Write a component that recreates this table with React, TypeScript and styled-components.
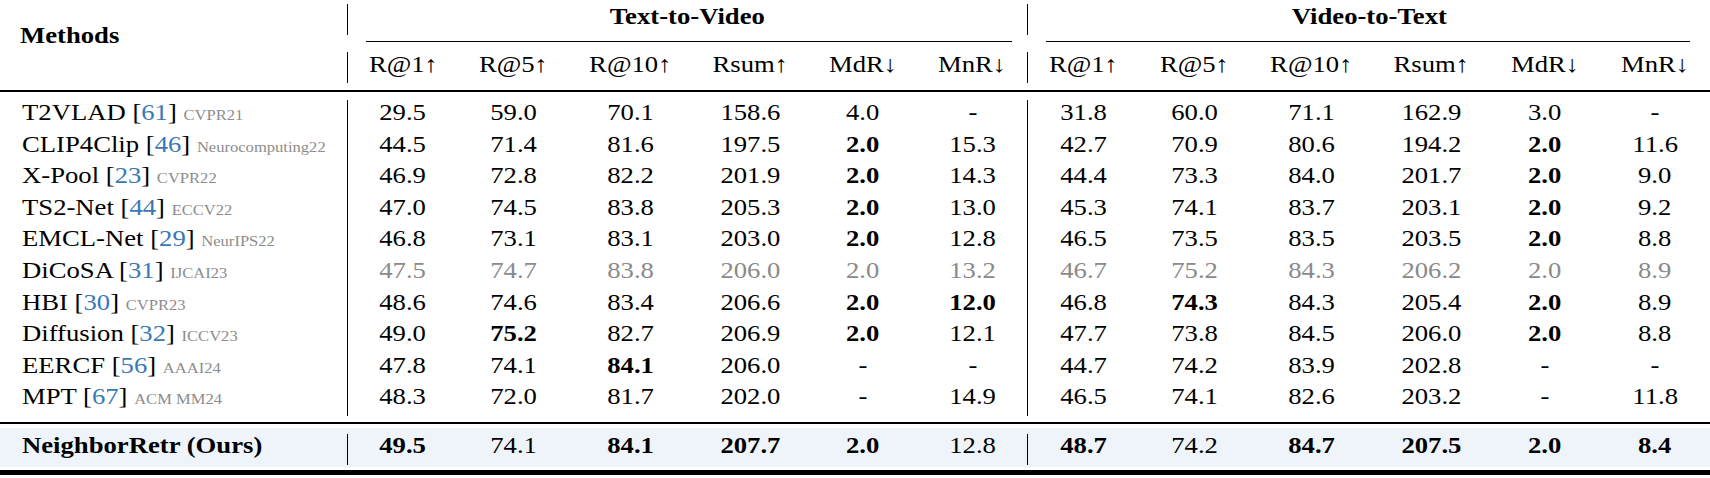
import React from "react";
import styled, { createGlobalStyle } from "styled-components";

const GlobalStyle = createGlobalStyle`
  html, body {
    margin: 0;
    padding: 0;
    background: #ffffff;
  }
`;

// method column + 6 text-to-video + 6 video-to-text columns
const COLUMNS =
  "347px 111px 111px 123px 116px 110px 109px 112px 111px 123px 117px 110px 110px";

const Page = styled.div`
  width: 1710px;
  font-family: "Liberation Serif", "Times New Roman", "DejaVu Serif", serif;
  font-size: 23.5px;
  color: #000;
`;

// the source table was captured a little wide, so glyphs get stretched sideways
const Stretch = styled.span<{ $origin?: "left" | "center" }>`
  display: inline-block;
  white-space: nowrap;
  transform: scaleX(1.135);
  transform-origin: ${(p) => p.$origin ?? "center"};
`;

const HeaderGrid = styled.div`
  display: grid;
  grid-template-columns: ${COLUMNS};
  grid-template-rows: 31px 17px 31px;
  padding-top: 4px;
`;

const MethodsHead = styled.div`
  grid-row: 1 / 4;
  grid-column: 1;
  padding: 17.5px 0 0 20px;
  line-height: 26px;
  font-weight: 700;
`;

const GroupTitle = styled.div<{ $col: number }>`
  grid-row: 1;
  grid-column: ${(p) => p.$col} / span 6;
  border-left: 1px solid #000;
  text-align: center;
  line-height: 24px;
  font-weight: 700;
`;

const CmidSlot = styled.div<{ $col: number; $left: number; $right: number }>`
  grid-row: 2;
  grid-column: ${(p) => p.$col} / span 6;
  padding: 6px ${(p) => p.$right}px 0 ${(p) => p.$left}px;
`;

const CmidLine = styled.div`
  height: 1px;
  background: #000;
`;

const SubHead = styled.div<{ $col: number; $sep?: boolean }>`
  grid-row: 3;
  grid-column: ${(p) => p.$col};
  text-align: center;
  line-height: 25px;
  border-left: ${(p) => (p.$sep ? "1px solid #000" : "none")};
`;

const Rule = styled.div<{ $h: number; $top: number; $bottom: number }>`
  height: ${(p) => p.$h}px;
  margin: ${(p) => p.$top}px 0 ${(p) => p.$bottom}px;
  background: #000;
`;

const Row = styled.div<{ $h: number; $lh: number }>`
  display: grid;
  grid-template-columns: ${COLUMNS};
  height: ${(p) => p.$h}px;
  line-height: ${(p) => p.$lh}px;
`;

const MethodCell = styled.div<{ $bold?: boolean }>`
  padding-left: 22px;
  white-space: nowrap;
  font-weight: ${(p) => (p.$bold ? 700 : 400)};
`;

const Cite = styled.span`
  color: #3b78b4;
`;

const Venue = styled.span`
  font-size: 14.6px;
  color: #8c8c8c;
`;

const Cell = styled.div<{ $sep?: boolean; $bold?: boolean; $muted?: boolean }>`
  text-align: center;
  white-space: nowrap;
  border-left: ${(p) => (p.$sep ? "1px solid #000" : "none")};
  font-weight: ${(p) => (p.$bold ? 700 : 400)};
  color: ${(p) => (p.$muted ? "#8a8a8a" : "#000")};
`;

const OursBand = styled.div`
  background: #eef4fa;
  padding: 6px 0 2px;
`;

type Method = {
  name: string;
  cite: string;
  venue: string;
  muted?: boolean;
  t2v: string[];
  v2t: string[];
};

// a leading "*" marks a bold (best) value
const methods: Method[] = [
  { name: "T2VLAD", cite: "61", venue: "CVPR21", t2v: ["29.5", "59.0", "70.1", "158.6", "4.0", "-"], v2t: ["31.8", "60.0", "71.1", "162.9", "3.0", "-"] },
  { name: "CLIP4Clip", cite: "46", venue: "Neurocomputing22", t2v: ["44.5", "71.4", "81.6", "197.5", "*2.0", "15.3"], v2t: ["42.7", "70.9", "80.6", "194.2", "*2.0", "11.6"] },
  { name: "X-Pool", cite: "23", venue: "CVPR22", t2v: ["46.9", "72.8", "82.2", "201.9", "*2.0", "14.3"], v2t: ["44.4", "73.3", "84.0", "201.7", "*2.0", "9.0"] },
  { name: "TS2-Net", cite: "44", venue: "ECCV22", t2v: ["47.0", "74.5", "83.8", "205.3", "*2.0", "13.0"], v2t: ["45.3", "74.1", "83.7", "203.1", "*2.0", "9.2"] },
  { name: "EMCL-Net", cite: "29", venue: "NeurIPS22", t2v: ["46.8", "73.1", "83.1", "203.0", "*2.0", "12.8"], v2t: ["46.5", "73.5", "83.5", "203.5", "*2.0", "8.8"] },
  { name: "DiCoSA", cite: "31", venue: "IJCAI23", muted: true, t2v: ["47.5", "74.7", "83.8", "206.0", "2.0", "13.2"], v2t: ["46.7", "75.2", "84.3", "206.2", "2.0", "8.9"] },
  { name: "HBI", cite: "30", venue: "CVPR23", t2v: ["48.6", "74.6", "83.4", "206.6", "*2.0", "*12.0"], v2t: ["46.8", "*74.3", "84.3", "205.4", "*2.0", "8.9"] },
  { name: "Diffusion", cite: "32", venue: "ICCV23", t2v: ["49.0", "*75.2", "82.7", "206.9", "*2.0", "12.1"], v2t: ["47.7", "73.8", "84.5", "206.0", "*2.0", "8.8"] },
  { name: "EERCF", cite: "56", venue: "AAAI24", t2v: ["47.8", "74.1", "*84.1", "206.0", "-", "-"], v2t: ["44.7", "74.2", "83.9", "202.8", "-", "-"] },
  { name: "MPT", cite: "67", venue: "ACM MM24", t2v: ["48.3", "72.0", "81.7", "202.0", "-", "14.9"], v2t: ["46.5", "74.1", "82.6", "203.2", "-", "11.8"] },
];

const ours = {
  t2v: ["*49.5", "74.1", "*84.1", "*207.7", "*2.0", "12.8"],
  v2t: ["*48.7", "74.2", "*84.7", "*207.5", "*2.0", "*8.4"],
};

const metrics = ["R@1↑", "R@5↑", "R@10↑", "Rsum↑", "MdR↓", "MnR↓"];

const ValueCells = ({ values, muted }: { values: string[]; muted?: boolean }) => (
  <>
    {values.map((v, i) => {
      const bold = v.startsWith("*");
      return (
        <Cell key={i} $sep={i === 0 || i === 6} $bold={bold} $muted={muted}>
          <Stretch>{bold ? v.slice(1) : v}</Stretch>
        </Cell>
      );
    })}
  </>
);

const App: React.FC = () => {
  return (
    <Page>
      <GlobalStyle />
      <HeaderGrid>
        <MethodsHead>
          <Stretch $origin="left">Methods</Stretch>
        </MethodsHead>
        <GroupTitle $col={2}>
          <Stretch>Text-to-Video</Stretch>
        </GroupTitle>
        <GroupTitle $col={8}>
          <Stretch>Video-to-Text</Stretch>
        </GroupTitle>
        <CmidSlot $col={2} $left={19} $right={15}>
          <CmidLine />
        </CmidSlot>
        <CmidSlot $col={8} $left={19} $right={20}>
          <CmidLine />
        </CmidSlot>
        {[...metrics, ...metrics].map((m, i) => (
          <SubHead key={i} $col={i + 2} $sep={i === 0 || i === 6}>
            <Stretch>{m}</Stretch>
          </SubHead>
        ))}
      </HeaderGrid>

      <Rule $h={2} $top={7} $bottom={8} />

      {methods.map((m) => (
        <Row key={m.name} $h={31.6} $lh={25.7}>
          <MethodCell>
            <Stretch $origin="left">
              {m.name} [<Cite>{m.cite}</Cite>] <Venue>{m.venue}</Venue>
            </Stretch>
          </MethodCell>
          <ValueCells values={[...m.t2v, ...m.v2t]} muted={m.muted} />
        </Row>
      ))}

      <Rule $h={2} $top={6} $bottom={4} />

      <OursBand>
        <Row $h={31} $lh={22}>
          <MethodCell $bold>
            <Stretch $origin="left">NeighborRetr (Ours)</Stretch>
          </MethodCell>
          <ValueCells values={[...ours.t2v, ...ours.v2t]} />
        </Row>
      </OursBand>

      <Rule $h={5} $top={3} $bottom={0} />
    </Page>
  );
};

export default App;
